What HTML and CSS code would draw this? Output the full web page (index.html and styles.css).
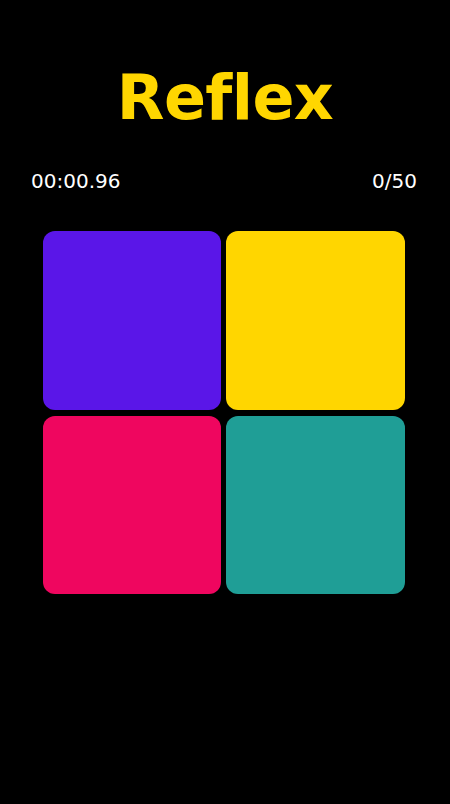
FILE: index.html
```html
<!DOCTYPE html>
<html>
<head>
<meta charset="utf-8">
<link rel="stylesheet" href="styles.css">
</head>
<body>
<div class="app">
  <h1 class="title">Reflex</h1>
  <div class="stats">
    <span class="timer">00:00.96</span>
    <span class="score">0/50</span>
  </div>
  <div class="board">
    <div class="tile purple"></div>
    <div class="tile yellow"></div>
    <div class="tile pink"></div>
    <div class="tile teal"></div>
  </div>
</div>
</body>
</html>
```
FILE: styles.css
```css
html, body {
  margin: 0;
  padding: 0;
  background: #000;
}
.app {
  width: 450px;
  height: 804px;
  background: #000;
  font-family: "DejaVu Sans", sans-serif;
  color: #fff;
}
.title {
  margin: 0;
  padding-top: 62px;
  font-size: 62px;
  line-height: 72px;
  font-weight: bold;
  letter-spacing: -0.6px;
  color: #ffd600;
  text-align: center;
}
.stats {
  display: flex;
  justify-content: space-between;
  margin-top: 35px;
  padding: 0 33px 0 31px;
  font-size: 20px;
  line-height: 24px;
}
.board {
  display: grid;
  grid-template-columns: 178px 179px;
  grid-template-rows: 179px 178px;
  gap: 6px 5px;
  margin: 38px 0 0 43px;
}
.tile {
  border-radius: 12px;
}
.purple { background: #5a16e8; }
.yellow { background: #ffd600; }
.pink { background: #ef065f; }
.teal { background: #1f9e96; }
```
